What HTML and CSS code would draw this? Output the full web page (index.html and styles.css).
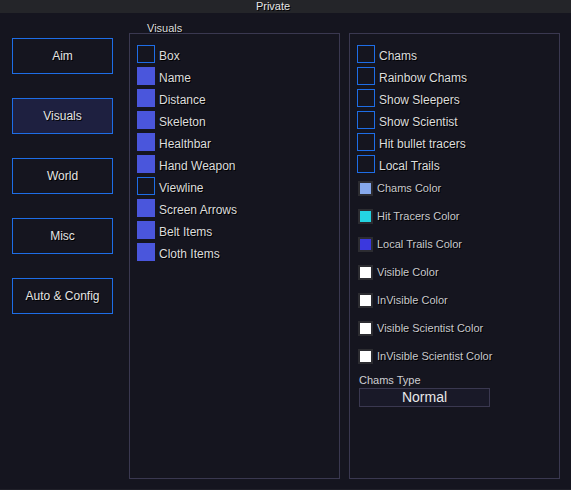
FILE: index.html
```html
<!DOCTYPE html>
<html>
<head>
<meta charset="utf-8">
<link rel="stylesheet" href="styles.css">
</head>
<body>
<div class="window">
  <div class="titlebar"><span class="title">Private</span></div>
  <div class="main">
    <nav class="nav">
      <div class="navbtn">Aim</div>
      <div class="navbtn active">Visuals</div>
      <div class="navbtn">World</div>
      <div class="navbtn">Misc</div>
      <div class="navbtn">Auto &amp; Config</div>
    </nav>
    <section class="col col-left">
      <div class="caption"><span>Visuals</span></div>
      <div class="group">
        <div class="checks">
          <div class="check"><span class="box"></span><span class="lbl">Box</span></div>
          <div class="check"><span class="box on"></span><span class="lbl">Name</span></div>
          <div class="check"><span class="box on"></span><span class="lbl">Distance</span></div>
          <div class="check"><span class="box on"></span><span class="lbl">Skeleton</span></div>
          <div class="check"><span class="box on"></span><span class="lbl">Healthbar</span></div>
          <div class="check"><span class="box on"></span><span class="lbl">Hand Weapon</span></div>
          <div class="check"><span class="box"></span><span class="lbl">Viewline</span></div>
          <div class="check"><span class="box on"></span><span class="lbl">Screen Arrows</span></div>
          <div class="check"><span class="box on"></span><span class="lbl">Belt Items</span></div>
          <div class="check"><span class="box on"></span><span class="lbl">Cloth Items</span></div>
        </div>
      </div>
    </section>
    <section class="col col-right">
      <div class="caption"></div>
      <div class="group">
        <div class="checks">
          <div class="check"><span class="box"></span><span class="lbl">Chams</span></div>
          <div class="check"><span class="box"></span><span class="lbl">Rainbow Chams</span></div>
          <div class="check"><span class="box"></span><span class="lbl">Show Sleepers</span></div>
          <div class="check"><span class="box"></span><span class="lbl">Show Scientist</span></div>
          <div class="check"><span class="box"></span><span class="lbl">Hit bullet tracers</span></div>
          <div class="check"><span class="box"></span><span class="lbl">Local Trails</span></div>
        </div>
        <div class="colors">
          <div class="color"><span class="swatch"><span class="fill c-chams"></span></span><span class="clbl">Chams Color</span></div>
          <div class="color"><span class="swatch"><span class="fill c-hit"></span></span><span class="clbl">Hit Tracers Color</span></div>
          <div class="color"><span class="swatch"><span class="fill c-trail"></span></span><span class="clbl">Local Trails Color</span></div>
          <div class="color"><span class="swatch"><span class="fill c-white"></span></span><span class="clbl">Visible Color</span></div>
          <div class="color"><span class="swatch"><span class="fill c-white"></span></span><span class="clbl">InVisible Color</span></div>
          <div class="color"><span class="swatch"><span class="fill c-white"></span></span><span class="clbl">Visible Scientist Color</span></div>
          <div class="color"><span class="swatch"><span class="fill c-white"></span></span><span class="clbl">InVisible Scientist Color</span></div>
        </div>
        <div class="combo-label">Chams Type</div>
        <div class="combo">Normal</div>
      </div>
    </section>
  </div>
</div>
</body>
</html>
```

FILE: styles.css
```css
html, body {
  margin: 0;
  padding: 0;
  background: #15151f;
}
body {
  width: 571px;
  height: 490px;
  overflow: hidden;
  font-family: "Liberation Sans", Arial, sans-serif;
  color: #dcdcdc;
}
.window {
  width: 571px;
  height: 489px;
  background: #15151f;
  border-bottom: 1px solid #202029;
  display: flex;
  flex-direction: column;
}
.titlebar {
  height: 13px;
  background: #242529;
  display: flex;
  justify-content: center;
  padding-right: 25px;
}
.title {
  font-size: 11px;
  line-height: 12px;
  color: #e6e6e6;
  text-shadow: 1px 1px 0 #000;
}
.main {
  display: flex;
  padding-left: 12px;
  align-items: flex-start;
}
.nav {
  display: flex;
  flex-direction: column;
  gap: 24px;
  padding-top: 25px;
  width: 101px;
}
.navbtn {
  box-sizing: border-box;
  height: 36px;
  border: 1px solid #1e6de6;
  display: flex;
  align-items: center;
  justify-content: center;
  font-size: 12px;
  color: #e4e4e4;
  text-shadow: 1px 1px 0 #000;
}
.navbtn.active {
  background: #1e2040;
}
.col {
  display: flex;
  flex-direction: column;
  width: 211px;
}
.col-left { margin-left: 16px; }
.col-right { margin-left: 9px; }
.caption {
  height: 20px;
  display: flex;
  align-items: flex-end;
  padding-left: 18px;
  font-size: 11px;
  line-height: 9px;
  color: #dcdcdc;
  text-shadow: 1px 1px 0 #000;
}
.group {
  box-sizing: border-box;
  height: 446px;
  border: 1px solid #3a3850;
  padding: 11px 7px 0 7px;
  display: flex;
  flex-direction: column;
}
.checks {
  display: flex;
  flex-direction: column;
  gap: 4px;
}
.check {
  display: flex;
  align-items: flex-start;
  gap: 4px;
  height: 18px;
}
.box {
  box-sizing: border-box;
  width: 18px;
  height: 18px;
  border: 1px solid #1e6de6;
  background: #15151f;
  flex: none;
}
.box.on {
  background: #4a56dc;
  border-color: #4a56dc;
}
.lbl {
  font-size: 12px;
  line-height: 18px;
  padding-top: 2px;
  color: #dcdcdc;
  text-shadow: 1px 1px 0 #000;
}
.colors {
  display: flex;
  flex-direction: column;
  margin-top: 1px;
}
.color {
  height: 28px;
  display: flex;
  align-items: center;
  gap: 4px;
  padding-left: 1px;
}
.swatch {
  box-sizing: border-box;
  width: 15px;
  height: 15px;
  border: 2px solid #2c2c31;
  display: flex;
  flex: none;
}
.fill { flex: 1; }
.c-chams { background: #86a8ec; }
.c-hit { background: #24d4e2; }
.c-trail { background: #3b38de; }
.c-white { background: #ffffff; }
.clbl {
  font-size: 11px;
  color: #c8c8cc;
  text-shadow: 1px 1px 0 #000;
}
.combo-label {
  margin-top: 4px;
  padding-left: 2px;
  font-size: 11px;
  line-height: 13px;
  color: #cfcfd3;
}
.combo {
  box-sizing: border-box;
  margin-left: 2px;
  margin-top: 1px;
  width: 131px;
  height: 19px;
  border: 1px solid #3a3850;
  background: #191928;
  font-size: 14px;
  line-height: 17px;
  text-align: center;
  color: #e8e8e8;
}
```
